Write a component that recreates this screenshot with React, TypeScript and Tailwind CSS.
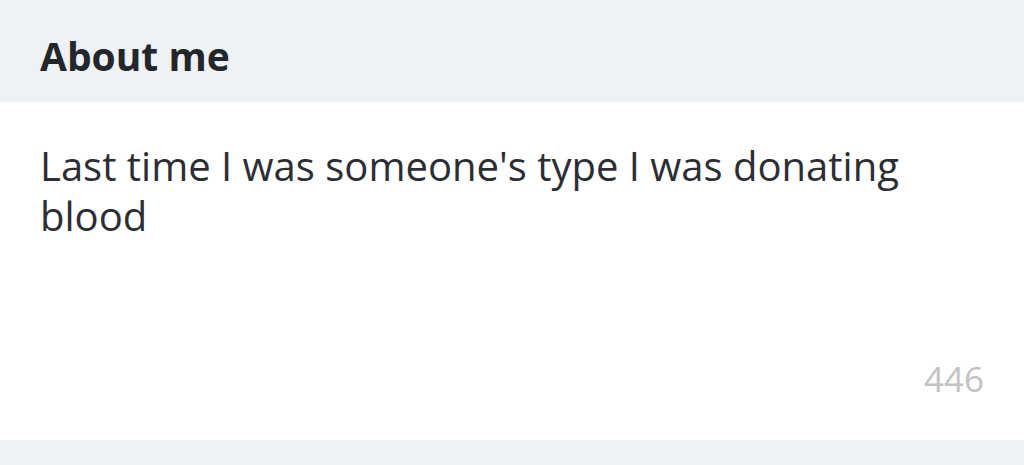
export default function App() {
  return (
    <div className="w-[1024px] h-[465px] bg-[#eff2f4] flex flex-col [font-variant-ligatures:none]" style={{ fontFamily: "'Open Sans', 'Noto Sans', sans-serif" }}>
      <div className="h-[102px] flex items-start px-[40px]">
        <h2 className="mt-[32px] text-[39px] font-bold text-[#23262a] leading-[48px]">About me</h2>
      </div>
      <div className="h-[338px] bg-white flex flex-col px-[40px]">
        <p className="mt-[39px] text-[40px] leading-[50px] text-[#2b2e33]">
          Last time I was someone's type I was donating blood
        </p>
        <div className="flex-1" />
        <div className="flex justify-end pb-[44px]">
          <span className="text-[35px] leading-none text-[#c3c3c3]">446</span>
        </div>
      </div>
    </div>
  );
}
